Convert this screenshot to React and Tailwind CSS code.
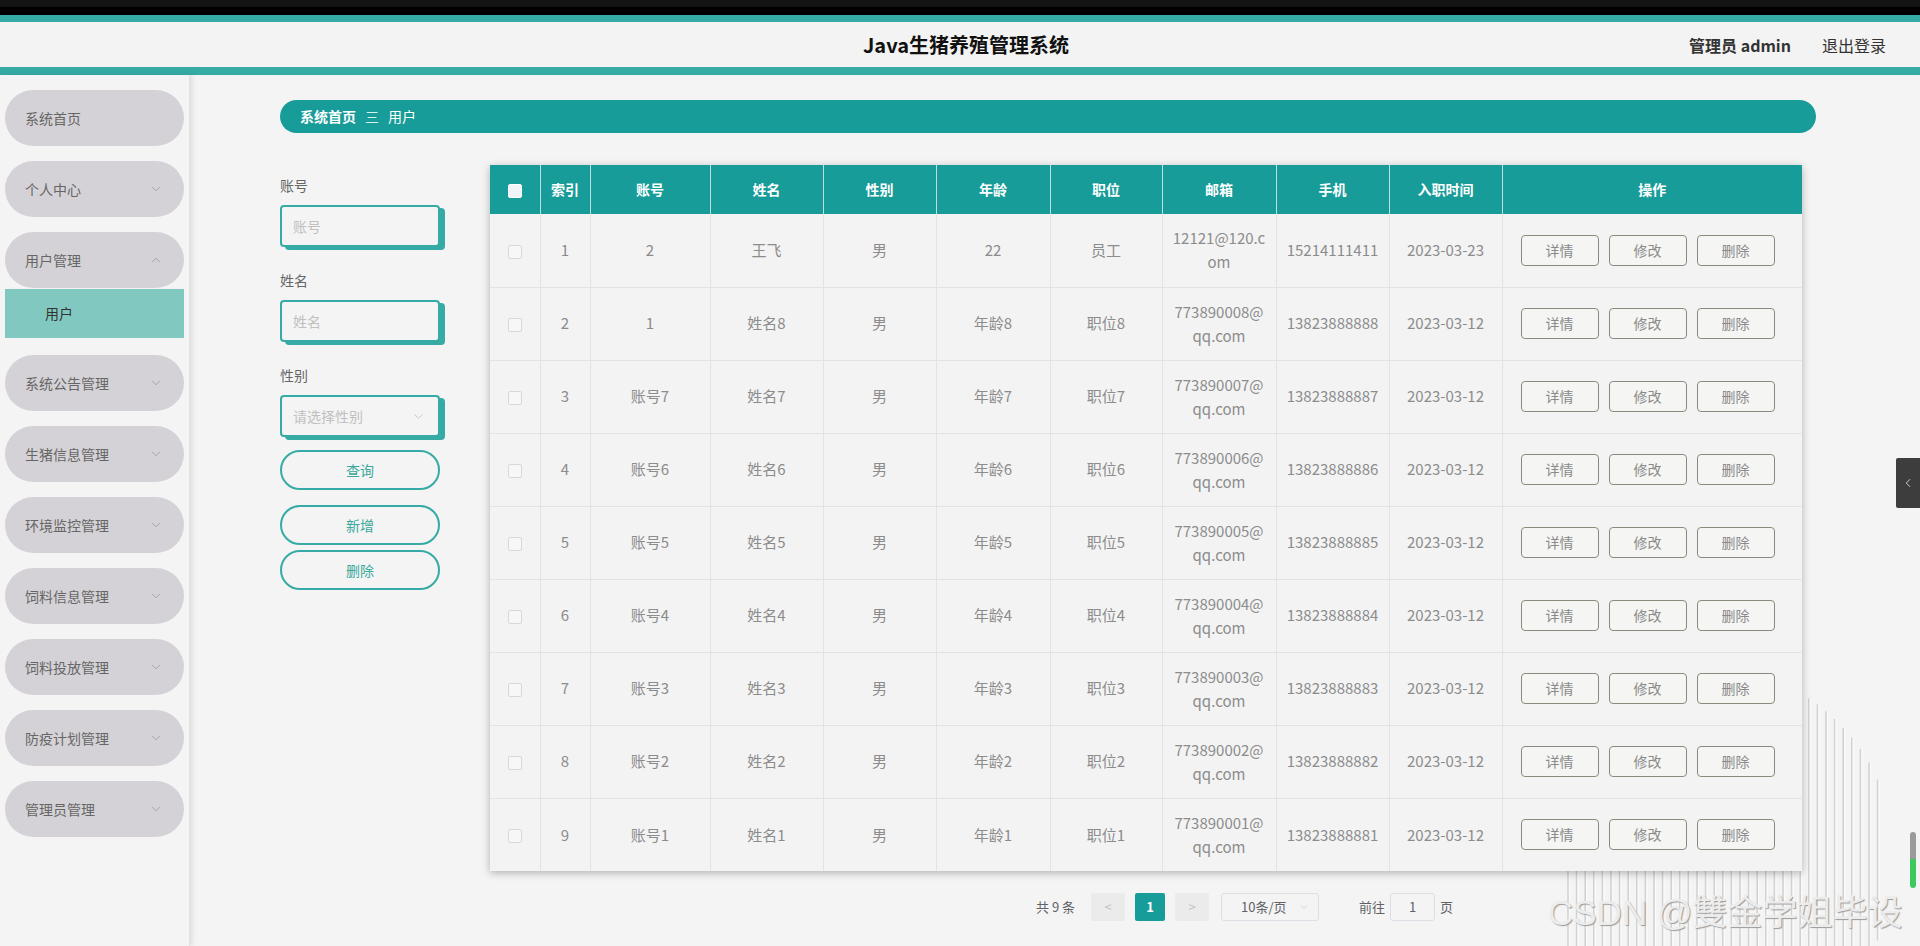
import React from 'react';
import { ChevronDown, ChevronUp, ChevronLeft } from 'lucide-react';

const menus = [
    { name: '系统首页', arrow: false },
    { name: '个人中心', arrow: true },
    { name: '用户管理', arrow: true, open: true, children: ['用户'] },
    { name: '系统公告管理', arrow: true },
    { name: '生猪信息管理', arrow: true },
    { name: '环境监控管理', arrow: true },
    { name: '饲料信息管理', arrow: true },
    { name: '饲料投放管理', arrow: true },
    { name: '防疫计划管理', arrow: true },
    { name: '管理员管理', arrow: true },
];

const columns = [
    { label: '索引', w: 'w-[50px]' },
    { label: '账号', w: 'w-[120px]' },
    { label: '姓名', w: 'w-[113px]' },
    { label: '性别', w: 'w-[113px]' },
    { label: '年龄', w: 'w-[114px]' },
    { label: '职位', w: 'w-[112px]' },
    { label: '邮箱', w: 'w-[114px]' },
    { label: '手机', w: 'w-[113px]' },
    { label: '入职时间', w: 'w-[113px]' },
    { label: '操作', w: 'w-[300px]' },
];

const rows = [
    { idx: 1, account: '2', name: '王飞', sex: '男', age: '22', job: '员工', email: '12121@120.com', phone: '15214111411', date: '2023-03-23' },
    ...[8, 7, 6, 5, 4, 3, 2, 1].map((n, i) => ({
        idx: i + 2,
        account: i === 0 ? '1' : `账号${n}`,
        name: `姓名${n}`,
        sex: '男',
        age: `年龄${n}`,
        job: `职位${n}`,
        email: `77389000${n}@qq.com`,
        phone: `1382388888${n}`,
        date: '2023-03-12',
    })),
];

// watermark stripes (video overlay)
const stripes = Array.from({ length: 37 }, (_, i) => {
    const x = 1568 + i * 8.6;
    const dx = x - 1700;
    const r = 195;
    const h = Math.sqrt(Math.max(r * r - dx * dx, 0));
    return { x, top: Math.max(860 - h, 640), bottom: Math.min(860 + h, 946) };
});

const Field = ({ label, placeholder, select }) => (
    <div className="flex flex-col">
        <div className="h-[20px] leading-[20px] text-[14px] text-[#666]">{label}</div>
        <div className="mt-[10px] w-[160px] h-[42px] border-2 border-[#36aba6] rounded-[4px] shadow-[5px_3px_0_#36aba6] bg-[#f4f4f5] flex items-center justify-between pl-[11px] pr-[12px]">
            <span className="text-[14px] text-[#c0c0c0]">{placeholder}</span>
            {select && <ChevronDown size={15} strokeWidth={1.3} className="text-[#c0c0c0]" />}
        </div>
    </div>
);

const OutlineBtn = ({ children, className = '' }) => (
    <button className={`w-[160px] h-[40px] rounded-full border-2 border-[#36aba6] text-[14px] text-[#3aa89a] bg-transparent ${className}`}>{children}</button>
);

const Checkbox = ({ header }) => (
    <span className={`inline-block w-[14px] h-[14px] rounded-[2px] align-middle ${header ? 'bg-[#eef4f8] border border-white' : 'bg-[#f7f7f7] border border-[#d8d8d8]'}`} />
);

const App = () => {
    return (
        <div className="relative w-full h-[946px] overflow-hidden bg-[#f4f4f5] flex flex-col font-['Noto_Sans_CJK_SC','Noto_Sans',sans-serif]">
            <div className="h-[7px] bg-[#141414]" />
            <div className="h-[8px] bg-black" />
            <div className="h-[7px] bg-[#36aba6]" />
            <header className="h-[45px] bg-[#f3f3f3] grid grid-cols-[1fr_auto_1fr] items-center">
                <div />
                <h1 className="pl-[12px] text-[20px] font-bold text-[#111]">Java生猪养殖管理系统</h1>
                <div className="flex justify-end items-center gap-[31px] pr-[34px] text-[16px] text-[#333]">
                    <span className="font-bold">管理员 admin</span>
                    <span>退出登录</span>
                </div>
            </header>
            <div className="h-[8px] bg-[#36aba6]" />

            <div className="flex flex-1 min-h-0">
                <aside className="w-[190px] shrink-0 bg-[#f4f4f5] border-r border-[#e2e2e2] shadow-[2px_0_5px_rgba(0,0,0,0.1)] pt-[15px] px-[5px] flex flex-col z-10">
                    {menus.map(m => (
                        <div key={m.name} className="flex flex-col">
                            <div className={`h-[56px] rounded-full bg-[#d4d2d6] flex items-center justify-between pl-[20px] pr-[21px] ${m.open ? 'mb-[1px]' : 'mb-[15px]'}`}>
                                <span className="text-[14px] text-[#666]">{m.name}</span>
                                {m.arrow && (m.open
                                    ? <ChevronUp size={14} strokeWidth={1.4} className="text-[#999]" />
                                    : <ChevronDown size={14} strokeWidth={1.4} className="text-[#999]" />)}
                            </div>
                            {m.children && m.children.map(c => (
                                <div key={c} className="h-[49px] mb-[17px] bg-[#80c8c0] flex items-center pl-[40px] text-[14px] text-[#333]">{c}</div>
                            ))}
                        </div>
                    ))}
                </aside>

                <main className="flex-1 pl-[90px] pr-[104px] pt-[25px]">
                    <div className="h-[33px] rounded-full bg-[#179c99] flex items-center pl-[20px] text-[14px] text-white">
                        <span className="font-bold">系统首页</span>
                        <span className="mx-[9px] text-[#d8efee]">三</span>
                        <span>用户</span>
                    </div>

                    <div className="flex mt-[32px]">
                        <div className="w-[165px] pt-[10px] flex flex-col">
                            <Field label="账号" placeholder="账号" />
                            <div className="mt-[23px]"><Field label="姓名" placeholder="姓名" /></div>
                            <div className="mt-[23px]"><Field label="性别" placeholder="请选择性别" select /></div>
                            <OutlineBtn className="mt-[13px]">查询</OutlineBtn>
                            <OutlineBtn className="mt-[15px]">新增</OutlineBtn>
                            <OutlineBtn className="mt-[5px]">删除</OutlineBtn>
                        </div>

                        <div className="ml-[45px] w-[1312px] flex flex-col relative z-10">
                            <div className="shadow-[0_2px_8px_rgba(0,0,0,0.28)] bg-[#f3f3f3]">
                                <table className="w-full table-fixed border-collapse">
                                    <thead>
                                        <tr className="h-[49px] bg-[#179c99] text-white text-[14px] font-bold">
                                            <th className="w-[50px] border-r border-white/70"><Checkbox header /></th>
                                            {columns.map((c, i) => (
                                                <th key={c.label} className={`${c.w} ${i < columns.length - 1 ? 'border-r border-white/70' : ''}`}>{c.label}</th>
                                            ))}
                                        </tr>
                                    </thead>
                                    <tbody className="text-[15px] text-[#8c8c8c]">
                                        {rows.map(r => (
                                            <tr key={r.idx} className="h-[73px] border-b border-[#e3e3e3] last:border-b-0">
                                                <td className="text-center border-r border-[#e3e3e3]"><Checkbox /></td>
                                                <td className="text-center border-r border-[#e3e3e3]">{r.idx}</td>
                                                <td className="text-center border-r border-[#e3e3e3]">{r.account}</td>
                                                <td className="text-center border-r border-[#e3e3e3]">{r.name}</td>
                                                <td className="text-center border-r border-[#e3e3e3]">{r.sex}</td>
                                                <td className="text-center border-r border-[#e3e3e3]">{r.age}</td>
                                                <td className="text-center border-r border-[#e3e3e3]">{r.job}</td>
                                                <td className="text-center border-r border-[#e3e3e3] px-[10px] leading-[24px] break-all">{r.email}</td>
                                                <td className="text-center border-r border-[#e3e3e3]">{r.phone}</td>
                                                <td className="text-center border-r border-[#e3e3e3]">{r.date}</td>
                                                <td className="pl-[18px]">
                                                    <div className="flex gap-[10px]">
                                                        {['详情', '修改', '删除'].map(b => (
                                                            <button key={b} className="w-[78px] h-[31px] rounded-[4px] border border-[#8a8a7c] text-[14px] text-[#8a8a8a] bg-[#f5f5f3]">{b}</button>
                                                        ))}
                                                    </div>
                                                </td>
                                            </tr>
                                        ))}
                                    </tbody>
                                </table>
                            </div>

                            <div className="mt-[22px] pl-[546px] flex items-center h-[28px] text-[13px] text-[#606266]">
                                <span>共 9 条</span>
                                <button className="ml-[16px] w-[34px] h-[28px] rounded-[2px] bg-[#ebebeb] text-[#c0c4cc] flex items-center justify-center text-[13px]">&lt;</button>
                                <button className="ml-[10px] w-[30px] h-[28px] rounded-[2px] bg-[#179c99] text-white font-bold text-[13px]">1</button>
                                <button className="ml-[10px] w-[34px] h-[28px] rounded-[2px] bg-[#ebebeb] text-[#c0c4cc] flex items-center justify-center text-[13px]">&gt;</button>
                                <div className="ml-[12px] w-[98px] h-[28px] rounded-[3px] border border-[#dcdfe6] flex items-center justify-between pl-[19px] pr-[8px] text-[#606266]">
                                    <span>10条/页</span>
                                    <ChevronDown size={12} strokeWidth={1.3} className="text-[#c0c4cc]" />
                                </div>
                                <span className="ml-[40px]">前往</span>
                                <div className="ml-[5px] w-[45px] h-[28px] rounded-[3px] border border-[#dcdfe6] flex items-center justify-center">1</div>
                                <span className="ml-[5px]">页</span>
                            </div>
                        </div>
                    </div>
                </main>
            </div>

            {/* video watermark overlay */}
            <svg className="absolute left-0 top-0 pointer-events-none" width="1920" height="946">
                {stripes.map(s => (
                    <g key={s.x}>
                        <line x1={s.x} y1={s.top} x2={s.x} y2={s.bottom} stroke="#d2d2d2" strokeWidth="1.6" />
                        <line x1={s.x + 1.6} y1={s.top} x2={s.x + 1.6} y2={s.bottom} stroke="#fafafa" strokeWidth="1.2" />
                    </g>
                ))}
            </svg>
            <div className="absolute left-[1548px] top-[892px] text-[35px] leading-[42px] text-[#ececec] whitespace-nowrap font-['Liberation_Sans','Noto_Sans_CJK_SC',sans-serif] [text-shadow:1px_1px_1px_#9a9a9a] pointer-events-none">CSDN @雙金学姐毕设</div>

            <div className="absolute right-0 top-[458px] w-[24px] h-[50px] bg-[#3d3d3d] rounded-l-[2px] flex items-center justify-center">
                <ChevronLeft size={14} strokeWidth={1.5} className="text-[#e0e0e0]" />
            </div>
            <div className="absolute left-[1910px] top-[832px] w-[6px] h-[56px] rounded-full overflow-hidden flex flex-col">
                <div className="h-[27px] bg-[#9a9a9a]" />
                <div className="flex-1 bg-[#3cc85c]" />
            </div>
        </div>
    );
};

export default App;
